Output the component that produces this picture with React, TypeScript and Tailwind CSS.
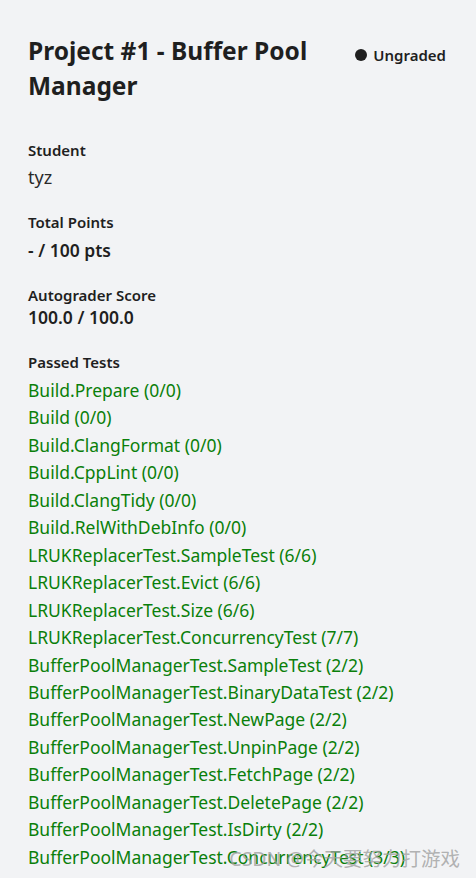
import React from 'react';

const tests = [
  'Build.Prepare (0/0)',
  'Build (0/0)',
  'Build.ClangFormat (0/0)',
  'Build.CppLint (0/0)',
  'Build.ClangTidy (0/0)',
  'Build.RelWithDebInfo (0/0)',
  'LRUKReplacerTest.SampleTest (6/6)',
  'LRUKReplacerTest.Evict (6/6)',
  'LRUKReplacerTest.Size (6/6)',
  'LRUKReplacerTest.ConcurrencyTest (7/7)',
  'BufferPoolManagerTest.SampleTest (2/2)',
  'BufferPoolManagerTest.BinaryDataTest (2/2)',
  'BufferPoolManagerTest.NewPage (2/2)',
  'BufferPoolManagerTest.UnpinPage (2/2)',
  'BufferPoolManagerTest.FetchPage (2/2)',
  'BufferPoolManagerTest.DeletePage (2/2)',
  'BufferPoolManagerTest.IsDirty (2/2)',
  'BufferPoolManagerTest.ConcurrencyTest (3/3)',
];

export default function App() {
  return (
    <div
      className="relative h-[878px] w-full overflow-hidden bg-[#f2f3f5] text-[#1f1f1f]"
      style={{ fontFamily: '"Noto Sans", "Open Sans", "Noto Sans CJK SC", sans-serif' }}
    >
      <div className="px-[28px] pt-[33px]">
        {/* header */}
        <div className="flex items-start justify-between">
          <h1 className="w-[305px] text-[24.5px] font-bold leading-[35px]">
            Project #1 - Buffer Pool Manager
          </h1>
          <div className="mt-[11px] flex items-center gap-[6px] pr-[2px] text-[15px] font-semibold">
            <span className="h-[12px] w-[12px] rounded-full bg-[#1f1f1f]" />
            Ungraded
          </div>
        </div>

        {/* summary */}
        <div className="mt-[37px]">
          <div className="text-[15px] font-semibold leading-[20px]">Student</div>
          <div className="mt-[5px] text-[18px] leading-[24px] text-[#2a2a2a]">tyz</div>
        </div>
        <div className="mt-[23px]">
          <div className="text-[15px] font-semibold leading-[20px]">Total Points</div>
          <div className="mt-[6px] text-[17.5px] font-semibold leading-[24px]">- / 100 pts</div>
        </div>
        <div className="mt-[23px]">
          <div className="text-[15px] font-semibold leading-[20px]">Autograder Score</div>
          <div className="text-[17.5px] font-semibold leading-[24px]">100.0 / 100.0</div>
        </div>

        {/* tests */}
        <div className="mt-[23px]">
          <div className="text-[15px] font-semibold leading-[20px]">Passed Tests</div>
          <ul className="mt-[5px]">
            {tests.map((t) => (
              <li key={t} className="text-[17.5px] leading-[27.45px] text-[#0a7f0a]">
                {t}
              </li>
            ))}
          </ul>
        </div>
      </div>

      {/* watermark */}
      <div className="absolute right-[16px] top-[846px] text-[19.5px] leading-[26px] text-[#a0a0a0]/80">
        CSDN @今天要努力打游戏
      </div>
    </div>
  );
}
